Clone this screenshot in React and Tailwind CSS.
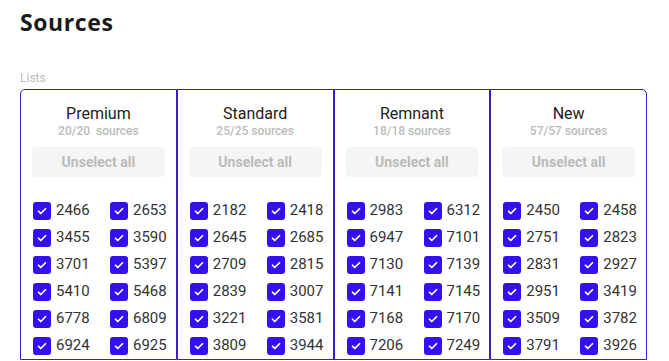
import React from "react";

const LISTS = [
  { name: "Premium", count: "20/20  sources", ids: ["2466", "2653", "3455", "3590", "3701", "5397", "5410", "5468", "6778", "6809", "6924", "6925"] },
  { name: "Standard", count: "25/25 sources", ids: ["2182", "2418", "2645", "2685", "2709", "2815", "2839", "3007", "3221", "3581", "3809", "3944"] },
  { name: "Remnant", count: "18/18 sources", ids: ["2983", "6312", "6947", "7101", "7130", "7139", "7141", "7145", "7168", "7170", "7206", "7249"] },
  { name: "New", count: "57/57 sources", ids: ["2450", "2458", "2751", "2823", "2831", "2927", "2951", "3419", "3509", "3782", "3791", "3926"] },
];

function Check({ label }) {
  return (
    <div className="flex items-center h-[27px]">
      <span className="w-[18px] h-[18px] rounded-[3px] bg-[#3311ee] flex items-center justify-center shrink-0">
        <svg width="12" height="12" viewBox="0 0 24 24" fill="none" stroke="#fff" strokeWidth="3.5" strokeLinecap="round" strokeLinejoin="round">
          <path d="M5 12.5l4.5 4.5L19 7.5" />
        </svg>
      </span>
      <span className="ml-[5px] text-[15px] text-[#333]">{label}</span>
    </div>
  );
}

function ListCard({ list, first, last }) {
  return (
    <div className={`border border-[#3a1fc9] ${first ? "rounded-tl-[5px]" : ""} ${last ? "rounded-tr-[5px]" : ""}`}>
      <div className="pt-[14px] text-center">
        <div className="text-[16px] leading-[20px] text-[#222]">{list.name}</div>
        <div className="text-[12px] leading-[15px] text-[#bbb] font-medium whitespace-pre">{list.count}</div>
      </div>
      <div className="mx-[11px] mt-[8px] h-[30px] rounded bg-[#f5f5f5] flex items-center justify-center text-[14px] font-bold text-[#bbb]">
        Unselect all
      </div>
      <div className="grid grid-cols-[77px_77px] pl-[12px] pt-[20px]">
        {list.ids.map((id) => (
          <Check key={id} label={id} />
        ))}
      </div>
    </div>
  );
}

export default function App() {
  return (
    <div className="bg-white w-[669px] h-[361px] overflow-hidden px-5 pt-[7px]" style={{ fontFamily: "Roboto, 'Liberation Sans', sans-serif" }}>
      <h1 className="text-[23px] leading-[30px] font-bold text-[#1a1a1a] tracking-[0.6px]" style={{ fontFamily: "'Open Sans', 'Liberation Sans', sans-serif" }}>
        Sources
      </h1>
      <div className="mt-[34px] text-[12px] leading-[14px] text-[#bbb]">Lists</div>
      <div className="mt-[4px] w-[627px] grid grid-cols-4">
        {LISTS.map((l, i) => (
          <ListCard key={l.name} list={l} first={i === 0} last={i === LISTS.length - 1} />
        ))}
      </div>
    </div>
  );
}
